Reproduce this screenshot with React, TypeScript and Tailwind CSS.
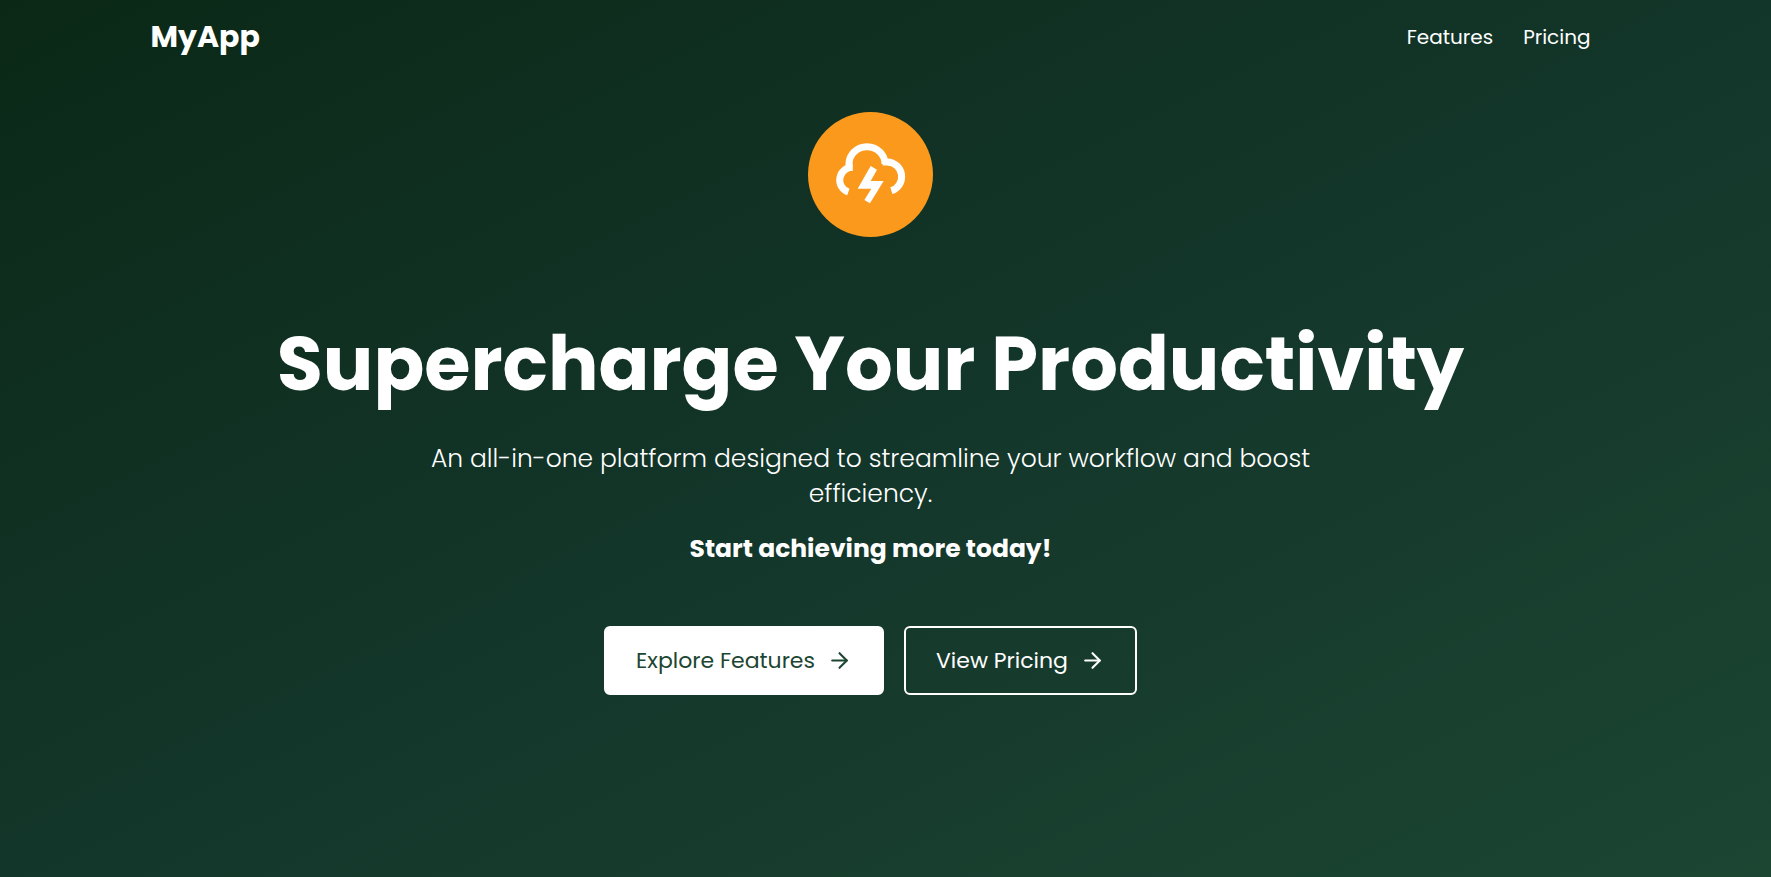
import { FiArrowRight } from "react-icons/fi";

function ThunderIcon() {
  return (
    <svg viewBox="0 0 375 375" className="w-full h-full" aria-hidden="true">
      <g fill="none" stroke="#fff" strokeWidth="21">
        <path d="M121 240A38 38 0 0 1 134 166" />
        <path d="M123 177V156A54 52 0 0 1 231 156" />
        <path d="M224 150H238A44 44 0 0 1 250 236" />
      </g>
      <path
        fill="#fff"
        d="M188 162L207 173L188 207H227L186 274L169 264L190 230H149Z"
      />
    </svg>
  );
}

function Navbar() {
  return (
    <header className="flex items-center justify-between h-[73px]">
      <a href="#" className="text-[30px] leading-[45px] font-bold">
        MyApp
      </a>
      <nav className="flex gap-[30px] text-[20px] leading-[30px]">
        <a href="#features">Features</a>
        <a href="#pricing">Pricing</a>
      </nav>
    </header>
  );
}

function Hero() {
  return (
    <main className="flex flex-col items-center text-center pt-[39px] pb-20">
      <div className="w-[125px] h-[125px] rounded-full bg-[#fb991c]">
        <ThunderIcon />
      </div>
      <h1 className="mt-20 text-[75px] leading-[94px] font-bold">
        Supercharge Your Productivity
      </h1>
      <p className="mt-[30px] max-w-[900px] text-[25px] leading-[35px] font-light">
        An all-in-one platform designed to streamline your workflow and boost
        efficiency.
      </p>
      <p className="mt-5 text-[25px] leading-[35px] font-bold">
        Start achieving more today!
      </p>
      <div className="mt-[60px] flex flex-wrap justify-center gap-5 text-[22px]">
        <button className="flex items-center gap-3 h-[69px] px-[30px] rounded-md border-2 border-white bg-white text-[#1c4532]">
          Explore Features
          <FiArrowRight className="w-[25px] h-[25px]" />
        </button>
        <button className="flex items-center gap-3 h-[69px] px-[30px] rounded-md border-2 border-white">
          View Pricing
          <FiArrowRight className="w-[25px] h-[25px]" />
        </button>
      </div>
    </main>
  );
}

export default function App() {
  return (
    <div className="min-h-screen pr-[30px] text-white font-['Poppins','Inter',sans-serif] bg-[linear-gradient(to_bottom_right,#0b2816,#13362a,#1c4532)]">
      <div className="max-w-[1440px] mx-auto">
        <Navbar />
        <Hero />
      </div>
    </div>
  );
}
